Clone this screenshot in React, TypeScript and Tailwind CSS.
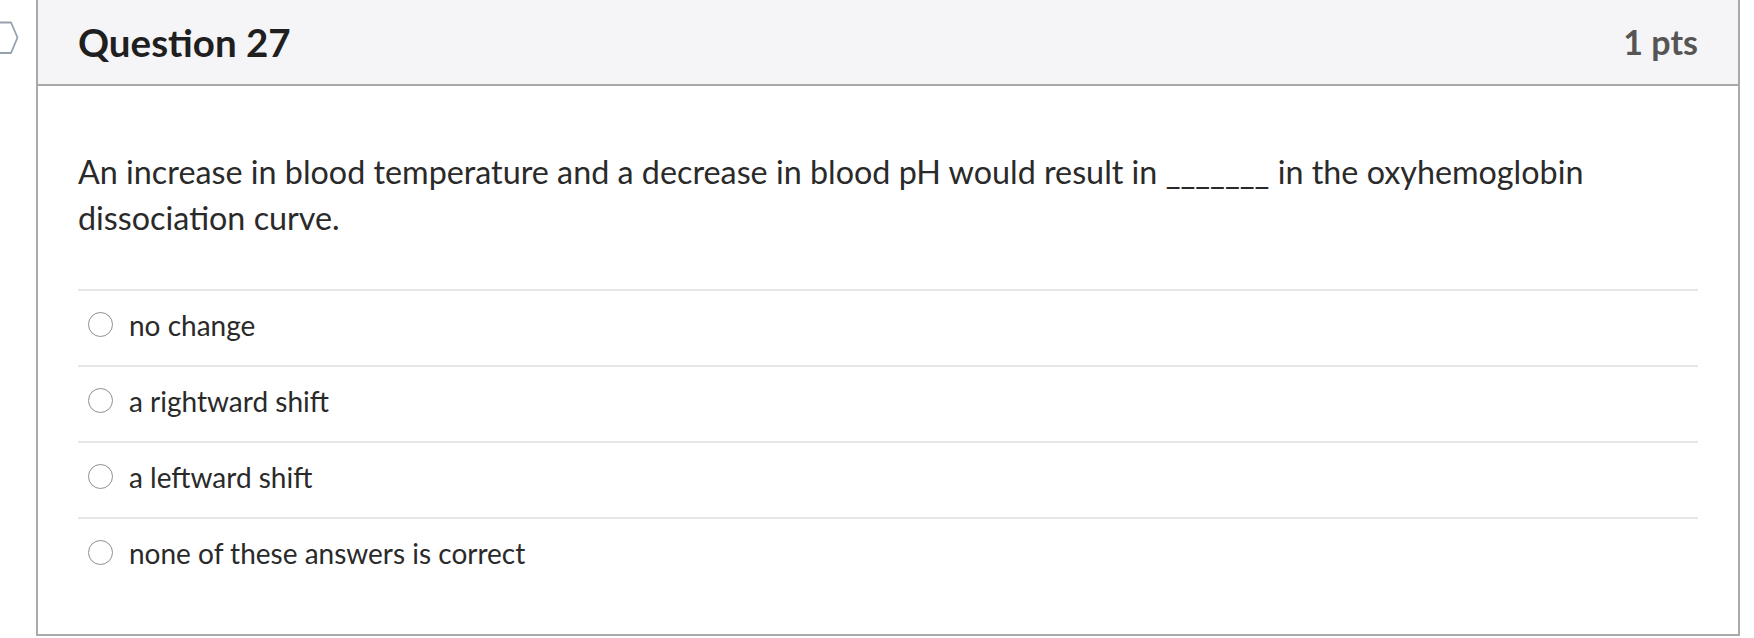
const answers = ['no change', 'a rightward shift', 'a leftward shift', 'none of these answers is correct']

export default function App() {
  return (
    <div className="flex bg-white h-[638px] overflow-hidden" style={{ fontFamily: 'Lato, "Open Sans", sans-serif' }}>
      <div className="w-[36px] shrink-0 pt-[21px]">
        <svg width="20" height="34" viewBox="0 0 20 34" fill="none">
          <path d="M-2 1.5H11L17.5 16.5L11 32H-2" stroke="#95a2ae" strokeWidth="1.8" strokeLinejoin="round" />
        </svg>
      </div>
      <div className="w-[1704px] h-[636px] border-x-2 border-b-2 border-[#a9a9a9] flex flex-col">
        <div className="h-[86px] shrink-0 bg-[#f5f5f7] border-b-2 border-[#a9a9a9] flex items-center justify-between pl-10 pr-10">
          <h2 className="text-[38.5px] font-bold leading-none text-[#1f1f1f]">Question 27</h2>
          <span className="text-[34px] font-bold text-[#555] leading-none">1 pts</span>
        </div>
        <div className="px-10 pt-[63px]">
          <p className="text-[32.3px] leading-[46px] text-[#2a2a2a]">
            An increase in blood temperature and a decrease in blood pH would result in _______ in the oxyhemoglobin dissociation curve.
          </p>
          <div className="mt-[48px]">
            {answers.map((a) => (
              <div key={a} className="h-[76px] border-t-2 border-[#e6e6e6] flex items-center pl-[10px] pb-[7px]">
                <span className="w-[25px] h-[25px] rounded-full border-[1.5px] border-[#8f8f8f] bg-white shrink-0" />
                <span className="ml-4 text-[28px] text-[#2a2a2a]">{a}</span>
              </div>
            ))}
          </div>
        </div>
      </div>
    </div>
  )
}
